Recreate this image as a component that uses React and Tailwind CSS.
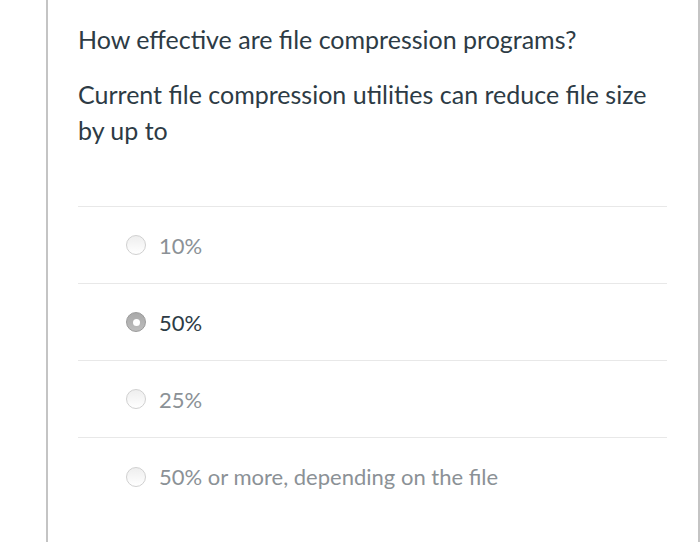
import React from "react";

const options = [
  { label: "10%", selected: false },
  { label: "50%", selected: true },
  { label: "25%", selected: false },
  { label: "50% or more, depending on the file", selected: false },
];

const Radio = ({ selected }) =>
  selected ? (
    <span className="flex h-[20px] w-[20px] shrink-0 items-center justify-center rounded-full border border-[#9a9a9a] bg-gradient-to-b from-[#a9a9a9] to-[#bdbdbd]">
      <span className="h-[7px] w-[7px] rounded-full bg-white" />
    </span>
  ) : (
    <span className="h-[20px] w-[20px] shrink-0 rounded-full border border-[#d0d0d0] bg-gradient-to-b from-[#eeeeee] to-white" />
  );

const App = () => {
  return (
    <div className="flex h-[542px] w-[700px] overflow-hidden bg-white font-['Lato','Open_Sans',sans-serif] text-[#2d3b45]">
      <div className="w-[46px] shrink-0" />
      <div className="flex flex-1 flex-col border-l-2 border-r-2 border-[#c4c4c4] pl-[30px] pr-[31px]">
        <h2 className="mt-[21px] text-[25px] leading-[36px]">
          How effective are file compression programs?
        </h2>
        <p className="mt-[19px] text-[25px] leading-[36px]">
          Current file compression utilities can reduce file size by up to
        </p>

        <div className="mt-[58px] border-t border-[#e8e8e8]">
          {options.map((opt, i) => (
            <div
              key={opt.label}
              className={`flex h-[77px] items-center gap-[13px] pl-[48px] ${
                i < options.length - 1 ? "border-b border-[#e8e8e8]" : ""
              }`}
            >
              <Radio selected={opt.selected} />
              <span
                className={`text-[22px] ${
                  opt.selected ? "text-[#2d3b45]" : "text-[#8b9196]"
                }`}
              >
                {opt.label}
              </span>
            </div>
          ))}
        </div>
      </div>
    </div>
  );
};

export default App;
